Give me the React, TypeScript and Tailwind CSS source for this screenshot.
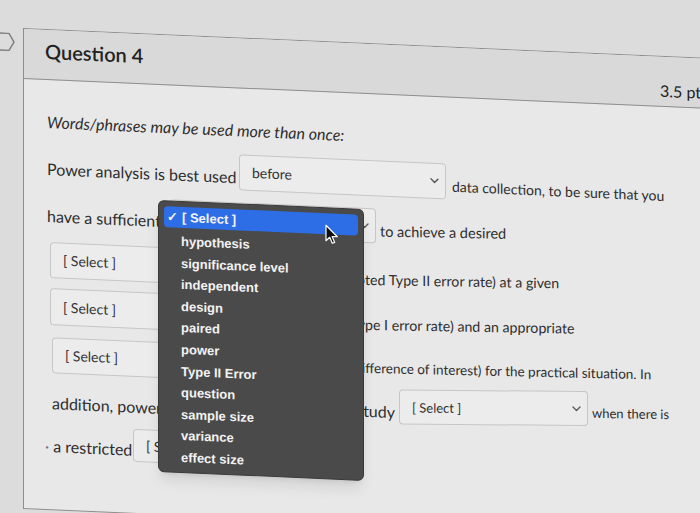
import React from 'react';

const options = [
  'hypothesis',
  'significance level',
  'independent',
  'design',
  'paired',
  'power',
  'Type II Error',
  'question',
  'sample size',
  'variance',
  'effect size',
];

function Chevron() {
  return (
    <svg width="9" height="6" viewBox="0 0 9 6" className="shrink-0">
      <path d="M1 1l3.5 3.5L8 1" fill="none" stroke="#5a5a5a" strokeWidth="1.4" strokeLinecap="round" strokeLinejoin="round" />
    </svg>
  );
}

function Dropdown({ value, className }: { value: string; className: string }) {
  return (
    <div
      className={`flex shrink-0 items-center justify-between rounded-[4px] border border-[#c6c6c6] bg-[#ececec] pl-[12px] pr-[6px] text-[#333] ${className}`}
    >
      <span>{value}</span>
      <Chevron />
    </div>
  );
}

function Cursor() {
  return (
    <svg width="13" height="20" viewBox="0 0 13 20">
      <path
        d="M1 1v15.5l3.7-3.6 2.6 5.9 2.4-1-2.6-5.8h5.2z"
        fill="#111"
        stroke="#fff"
        strokeWidth="1.2"
        strokeLinejoin="round"
      />
    </svg>
  );
}

export default function App() {
  return (
    <div className="h-[513px] w-[700px] overflow-hidden bg-[#dcdcdc] font-['Lato','Open_Sans',sans-serif] text-[#2e2e2e]">
      <div className="relative flex h-[560px] w-[730px] origin-top-left skew-y-[2.5deg]">
        {/* previous question tab edge */}
        <div className="w-[23px] shrink-0 pt-[32px]">
          <svg width="16" height="19" viewBox="0 0 16 19">
            <path d="M0 1h9l5 8.5-5 8.5H0" fill="none" stroke="#7c7c7c" strokeWidth="1.4" strokeLinejoin="round" />
          </svg>
        </div>

        {/* Question card */}
        <div className="mt-[27px] flex-1 self-start border-t border-b border-l border-[#8e8e8e] bg-[#e8e8e8]">
          <div className="flex h-[50px] border-b border-[#8e8e8e] bg-[#d9d9d9]">
            <div className="w-[636px] pl-[21px] pt-[7px] text-[20px] font-semibold leading-[28px] text-[#222]">
              Question 4
            </div>
            <div className="pt-[22px] text-[16px] leading-[24px] text-[#222]">3.5 pts</div>
          </div>

          <div className="pl-[23px] pt-[30px] pb-[51px] text-[16px] leading-[24px] whitespace-nowrap">
            <p className="italic">Words/phrases may be used more than once:</p>

            {/* row 1 */}
            <div className="mt-[12px] flex h-[36px] items-start">
              <span className="mt-[11px] w-[192px]">Power analysis is best used</span>
              <Dropdown value="before" className="h-[36px] w-[207px] text-[14px]" />
              <span className="mt-[13px] ml-[6px] text-[14px] leading-[20px]">data collection, to be sure that you</span>
            </div>

            {/* row 2 */}
            <div className="mt-[12px] flex h-[35px] items-start">
              <span className="mt-[10px] w-[123px]">have a sufficient</span>
              <Dropdown value="[ Select ]" className="h-[35px] w-[206px] text-[14px]" />
              <span className="mt-[12px] ml-[4px] origin-left skew-y-[-1.5deg] text-[14.5px] leading-[22px]">
                to achieve a desired
              </span>
            </div>

            {/* row 3 */}
            <div className="mt-[13px] flex h-[36px] items-start">
              <Dropdown value="[ Select ]" className="ml-[3px] h-[36px] w-[206px] text-[14px]" />
              <span className="mt-[13px] ml-[6px] w-[103px] overflow-hidden text-right text-[14.2px] leading-[22px]">
                (1 - the accep
              </span>
              <span className="mt-[13px] origin-left skew-y-[-1.5deg] text-[14.2px] leading-[22px]">
                ted Type II error rate) at a given
              </span>
            </div>

            {/* row 4 */}
            <div className="mt-[10px] flex h-[37px] items-start">
              <Dropdown value="[ Select ]" className="ml-[3px] h-[37px] w-[206px] text-[14px]" />
              <span className="mt-[12px] ml-[6px] w-[103px] overflow-hidden text-right text-[14.2px] leading-[22px]">
                (the chosen Ty
              </span>
              <span className="mt-[12px] origin-left skew-y-[-1.5deg] text-[14.2px] leading-[22px]">
                pe I error rate) and an appropriate
              </span>
            </div>

            {/* row 5 */}
            <div className="mt-[12px] flex h-[36px] items-start">
              <Dropdown value="[ Select ]" className="ml-[5px] h-[36px] w-[206px] text-[14px]" />
              <span className="mt-[6px] ml-[6px] w-[98px] overflow-hidden text-right text-[13.5px] leading-[22px]">
                (the smallest d
              </span>
              <span className="mt-[6px] origin-left skew-y-[-1.2deg] text-[13.5px] leading-[22px]">
                ifference of interest) for the practical situation. In
              </span>
            </div>

            {/* row 6 */}
            <div className="mt-[1px] flex h-[35px] items-start">
              <span className="mt-[17px] ml-[5px] w-[200px] overflow-hidden">addition, power analysis is</span>
              <span className="mt-[11px] w-[147px] overflow-hidden pr-[4px] text-right">used to plan a study</span>
              <div className="origin-left skew-y-[-2deg]">
                <Dropdown value="[ Select ]" className="h-[35px] w-[189px] text-[13px]" />
              </div>
              <span className="mt-[5px] ml-[4px] origin-left skew-y-[-1.5deg] text-[13px] leading-[20px]">
                when there is
              </span>
            </div>

            {/* row 7 */}
            <div className="mt-[16px] flex h-[33px] items-start">
              <span className="mt-[9px] -ml-[2px] w-[88px]">
                <span className="text-[#777]">·</span> a restricted
              </span>
              <Dropdown value="[ Select ]" className="h-[33px] w-[206px] text-[14px]" />
              <span className="mt-[9px] ml-[2px]">.</span>
            </div>
          </div>
        </div>

        {/* Native select popup */}
        <div className="absolute top-[193px] left-[158px] h-[272px] w-[206px] rounded-[6px] border border-[#3a3a3a] bg-[#4a4a4a] px-[5px] pt-[5px] font-['Liberation_Sans',Arial,sans-serif] text-[13px] font-bold text-[#f3f3f3] shadow-lg">
          <div className="flex h-[21px] items-center rounded-[4px] bg-[#2d6ee6] pl-[3px]">
            <span className="w-[15px]">✓</span>
            <span>[ Select ]</span>
          </div>
          <div className="pt-[3px]">
            {options.map((o) => (
              <div key={o} className="pl-[17px] leading-[21.6px]">
                {o}
              </div>
            ))}
          </div>
        </div>

        <div className="absolute top-[210px] left-[325px]">
          <Cursor />
        </div>
      </div>
    </div>
  );
}
